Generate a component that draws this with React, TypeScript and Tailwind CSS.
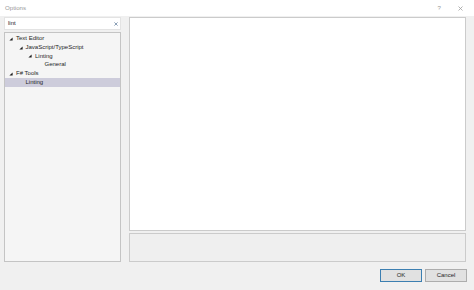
import React from "react";

type Node = { label: string; level: number; arrow?: boolean; selected?: boolean };

const nodes: Node[] = [
  { label: "Text Editor", level: 0, arrow: true },
  { label: "JavaScript/TypeScript", level: 1, arrow: true },
  { label: "Linting", level: 2, arrow: true },
  { label: "General", level: 3 },
  { label: "F# Tools", level: 0, arrow: true },
  { label: "Linting", level: 1, selected: true },
];

const pads = ["pl-[4px]", "pl-[13.5px]", "pl-[23px]", "pl-[32.5px]"];

const Arrow = () => (
  <svg width="4" height="4" viewBox="0 0 4 4" className="shrink-0">
    <polygon points="3.6,0.4 3.6,3.6 0.4,3.6" fill="#1e1e1e" />
  </svg>
);

const Cross = ({ color, size }: { color: string; size: number }) => (
  <svg width={size} height={size} viewBox="0 0 10 10" className="shrink-0">
    <path d="M1 1 L9 9 M9 1 L1 9" stroke={color} strokeWidth="1.6" />
  </svg>
);

const App = () => {
  return (
    <div
      className="w-[474px] h-[290px] bg-[#f0f0f0] flex flex-col overflow-hidden text-[#1e1e1e]"
      style={{ fontFamily: '"Liberation Sans", Arial, sans-serif' }}
    >
      <div className="h-[16px] bg-white flex items-center px-[5px] text-[6.1px] text-[#9a9a9a]">
        <span>Options</span>
        <span className="ml-auto mr-[17px]">?</span>
        <span className="mr-[6px]">
          <Cross color="#a0a0a0" size={5} />
        </span>
      </div>

      <div className="flex pt-[1px] pl-[4px] pr-[8px] gap-[8px]">
        <div className="w-[117px] flex flex-col gap-[2px]">
          <div className="h-[13px] bg-white border border-[#e3e3e3] flex items-center pl-[3px] pr-[2px] text-[6px]">
            <span>lint</span>
            <span className="ml-auto">
              <Cross color="#4a6a8d" size={4} />
            </span>
          </div>
          <div className="h-[230px] bg-[#f5f5f5] border border-[#c4c4c4] pt-[1.5px] text-[6px]">
            {nodes.map((n, i) => (
              <div
                key={i}
                className={`h-[8.7px] flex items-center gap-[3px] ${pads[n.level]} ${
                  n.selected ? "bg-[#cdccdb]" : ""
                }`}
              >
                {n.arrow ? <Arrow /> : <span className="w-[4px] shrink-0" />}
                <span>{n.label}</span>
              </div>
            ))}
          </div>
        </div>

        <div className="w-[338px] flex flex-col gap-[2px]">
          <div className="h-[214px] bg-white border border-[#cbcbcb]" />
          <div className="h-[29px] bg-[#efefef] border border-[#cbcbcb]" />
        </div>
      </div>

      <div className="flex items-start justify-end gap-[3px] pt-[7px] pr-[7px] text-[6px]">
        <button className="w-[42px] h-[13px] bg-[#e1e1e1] border border-[#3c7fb1] flex items-center justify-center">
          OK
        </button>
        <button className="w-[42px] h-[13px] bg-[#e1e1e1] border border-[#adadad] flex items-center justify-center">
          Cancel
        </button>
      </div>
    </div>
  );
};

export default App;
